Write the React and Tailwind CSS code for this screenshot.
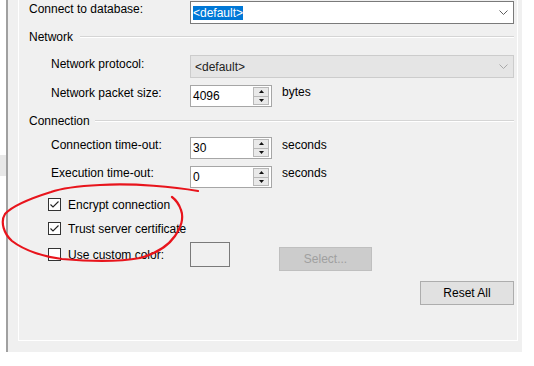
import React from "react";

function Chevron({ color }) {
  return (
    <svg width="9" height="5" viewBox="0 0 9 5" className="block">
      <polyline points="0.5,0.5 4.5,4.5 8.5,0.5" fill="none" stroke={color} strokeWidth="1" />
    </svg>
  );
}

function SpinBox({ value }) {
  return (
    <div className="w-[82px] h-[22px] bg-white border border-[#a6a6a6] flex items-stretch">
      <div className="flex-1 pl-[2px] flex items-center leading-[14px]">{value}</div>
      <div className="w-[16px] my-[1px] mr-[2px] flex flex-col">
        <div className="flex-1 bg-[#e9e9e9] border border-[#b8b8b8] flex items-center justify-center">
          <svg width="5" height="3" viewBox="0 0 5 3" className="block">
            <polygon points="0,3 5,3 2.5,0" fill="#111" />
          </svg>
        </div>
        <div className="flex-1 bg-[#e9e9e9] border border-t-0 border-[#b8b8b8] flex items-center justify-center">
          <svg width="5" height="3" viewBox="0 0 5 3" className="block">
            <polygon points="0,0 5,0 2.5,3" fill="#111" />
          </svg>
        </div>
      </div>
    </div>
  );
}

function CheckBox({ checked }) {
  return (
    <div className="w-[13px] h-[13px] bg-white border border-[#333333] shrink-0 flex items-center justify-center">
      {checked && (
        <svg width="11" height="11" viewBox="0 0 11 11" className="block">
          <polyline points="1.5,5.5 4,8 9.5,2.5" fill="none" stroke="#222" strokeWidth="1.1" />
        </svg>
      )}
    </div>
  );
}

export default function App() {
  return (
    <div className="w-[534px] h-[366px] bg-white relative overflow-hidden font-['Liberation_Sans',Arial,sans-serif] text-[12px] leading-[14px] text-black">
      <div className="flex h-[352px]">
        <div className="w-[6px] flex flex-col">
          <div className="h-[155px]" />
          <div className="h-[21px] bg-[#e8e8e8]" />
        </div>
        <div className="w-[516px] border-l-2 border-[#a0a0a0] bg-[#f0f0f0] pl-[10px] pr-[4px] pb-[11px]">
          <div className="h-full border-x border-b border-white pl-[10px] pr-[3px] flex flex-col">
            {/* Connect to database */}
            <div className="mt-[1px] flex h-[23px]">
              <div className="w-[161px] pt-[1px]">Connect to database:</div>
              <div className="flex-1 bg-white border border-[#7a7a7a] flex items-center pl-[2px] pr-[5px]">
                <span className="bg-[#0078d7] text-white leading-[14px]">&lt;default&gt;</span>
                <div className="flex-1" />
                <Chevron color="#5f5f5f" />
              </div>
            </div>

            {/* Network header */}
            <div className="mt-[6px] h-[14px] flex items-center">
              <span>Network</span>
              <div className="flex-1 ml-[7px] border-t border-b border-t-[#d5d5d5] border-b-white" />
            </div>

            {/* Network protocol */}
            <div className="mt-[11px] flex h-[23px]">
              <div className="w-[161px] pl-[22px] pt-[2px]">Network protocol:</div>
              <div className="flex-1 bg-[#e5e5e5] border border-[#cccccc] flex items-center pl-[4px] pr-[5px]">
                <span className="text-[#222]">&lt;default&gt;</span>
                <div className="flex-1" />
                <Chevron color="#a8a8a8" />
              </div>
            </div>

            {/* Network packet size */}
            <div className="mt-[7px] flex h-[22px]">
              <div className="w-[161px] pl-[22px] pt-[1px]">Network packet size:</div>
              <SpinBox value="4096" />
              <div className="ml-[10px] pt-0">bytes</div>
            </div>

            {/* Connection header */}
            <div className="mt-[7px] h-[14px] flex items-center">
              <span>Connection</span>
              <div className="flex-1 ml-[5px] border-t border-b border-t-[#d5d5d5] border-b-white" />
            </div>

            {/* Connection time-out */}
            <div className="mt-[9px] flex h-[22px]">
              <div className="w-[161px] pl-[22px] pt-[1px]">Connection time-out:</div>
              <SpinBox value="30" />
              <div className="ml-[10px] pt-[1px]">seconds</div>
            </div>

            {/* Execution time-out */}
            <div className="mt-[7px] flex h-[22px]">
              <div className="w-[161px] pl-[22px] pt-0">Execution time-out:</div>
              <SpinBox value="0" />
              <div className="ml-[10px] pt-0">seconds</div>
            </div>

            {/* Checkboxes */}
            <div className="mt-[10px] h-[13px] flex items-center pl-[19px]">
              <CheckBox checked />
              <span className="ml-[7px]">Encrypt connection</span>
            </div>
            <div className="mt-[11px] h-[13px] flex items-center pl-[19px]">
              <CheckBox checked />
              <span className="ml-[7px]">Trust server certificate</span>
            </div>
            <div className="mt-[7px] flex items-start">
              <div className="w-[161px] h-[25px] pl-[19px] flex items-center">
                <CheckBox />
                <span className="ml-[7px]">Use custom color:</span>
              </div>
              <div className="w-[40px] h-[25px] border border-[#7a7a7a] bg-[#f0f0f0]" />
              <div className="ml-[49px] mt-[5px] w-[93px] h-[24px] bg-[#cccccc] border border-[#bfbfbf] text-[#a0a0a0] flex items-center justify-center">
                Select...
              </div>
            </div>

            {/* Reset All */}
            <div className="mt-[10px] flex justify-end">
              <div className="w-[94px] h-[24px] bg-[#e1e1e1] border border-[#adadad] flex items-center justify-center">
                Reset All
              </div>
            </div>
          </div>
        </div>
      </div>

      {/* Red annotation */}
      <svg className="absolute left-0 top-0 pointer-events-none" width="534" height="366" viewBox="0 0 534 366">
        <path
          d="M198,191 C175,187 135,183 100,185 C80,186 62,188 51,192 C35,197 14,204 5,214 C0,222 4,234 12,241 C25,251 45,257 62,259 C85,261 118,262 140,258 C155,254 168,246 175,236 C181,228 184,218 181,210 C179,204 176,200 172,197"
          fill="none"
          stroke="#e8141c"
          strokeWidth="2.2"
          strokeLinecap="round"
        />
      </svg>
    </div>
  );
}
